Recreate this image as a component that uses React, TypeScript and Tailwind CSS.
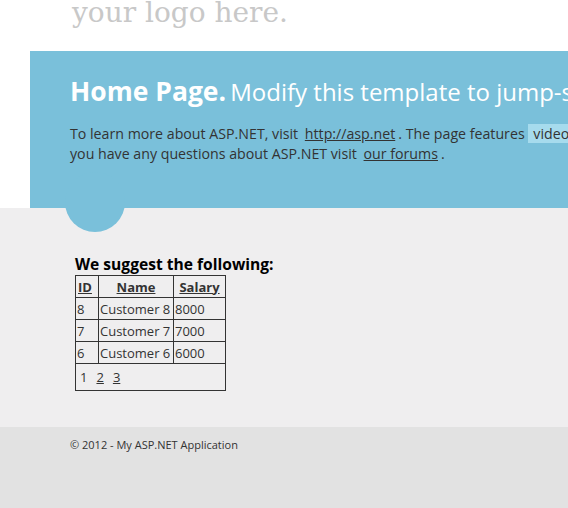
const rows = [
  { id: 8, name: 'Customer 8', salary: 8000 },
  { id: 7, name: 'Customer 7', salary: 7000 },
  { id: 6, name: 'Customer 6', salary: 6000 },
]

const sans = "font-['Open_Sans',sans-serif]"

export default function App() {
  return (
    <div className={`relative h-[508px] w-[568px] overflow-hidden bg-white text-[#333] ${sans}`}>
      <header className="flex h-[51px] items-start pl-[72px]">
        <p className="-mt-[4px] whitespace-nowrap font-['DejaVu_Serif',serif] text-[28px] leading-[34px] text-[#c8c8c8]">your logo here.</p>
      </header>

      <section className="ml-[30px] h-[157px] w-[960px] bg-[#7ac0da] pl-[40px] pt-[22px]">
        <h1 className="whitespace-nowrap leading-[36px] text-white">
          <span className="text-[26.5px] font-bold">Home Page.</span>{' '}
          <span className="text-[24px]">Modify this template to jump-start your ASP.NET application.</span>
        </h1>
        <p className="mt-[11px] whitespace-nowrap text-[14.2px] leading-[20px] text-[#333]">
          To learn more about ASP.NET, visit <a className="mx-[3px] underline">http://asp.net</a>. The page features{' '}
          <mark className="bg-[#a6dbed] px-[5px] text-[#333]">videos, tutorials, and samples</mark> to help you get the most from ASP.NET. If
          <br />
          you have any questions about ASP.NET visit <a className="mx-[3px] underline">our forums</a>.
        </p>
      </section>

      <div className="absolute left-[65px] top-[172px] h-[60px] w-[60px] rounded-full bg-[#7ac0da]" />

      <main className="h-[219px] bg-[#efeeef] pl-[75px] pt-[46px]">
        <h3 className="text-[15.6px] font-bold leading-[20px] text-black">We suggest the following:</h3>
        <table className="mt-[1px] border-collapse border border-[#333] text-[13px] leading-[20px] text-[#333]">
          <thead>
            <tr className="h-[22px]">
              <th className="w-[23px] border border-[#333] px-[2px] text-left font-bold underline">ID</th>
              <th className="w-[75px] border border-[#333] font-bold underline">Name</th>
              <th className="w-[52px] border border-[#333] px-[2px] font-bold underline">Salary</th>
            </tr>
          </thead>
          <tbody>
            {rows.map((r) => (
              <tr key={r.id} className="h-[22px]">
                <td className="border border-[#333] px-[1px]">{r.id}</td>
                <td className="border border-[#333] px-[1px]">{r.name}</td>
                <td className="border border-[#333] px-[1px]">{r.salary}</td>
              </tr>
            ))}
            <tr className="h-[27px]">
              <td colSpan={3} className="border border-[#333] px-[4px]">
                <span className="mr-[9px]">1</span>
                <a className="mr-[9px] underline">2</a>
                <a className="underline">3</a>
              </td>
            </tr>
          </tbody>
        </table>
      </main>

      <footer className="h-[81px] bg-[#e2e2e2] pl-[70px] pt-[10px]">
        <p className="text-[11px] leading-[16px] text-[#333]">© 2012 - My ASP.NET Application</p>
      </footer>
    </div>
  )
}
